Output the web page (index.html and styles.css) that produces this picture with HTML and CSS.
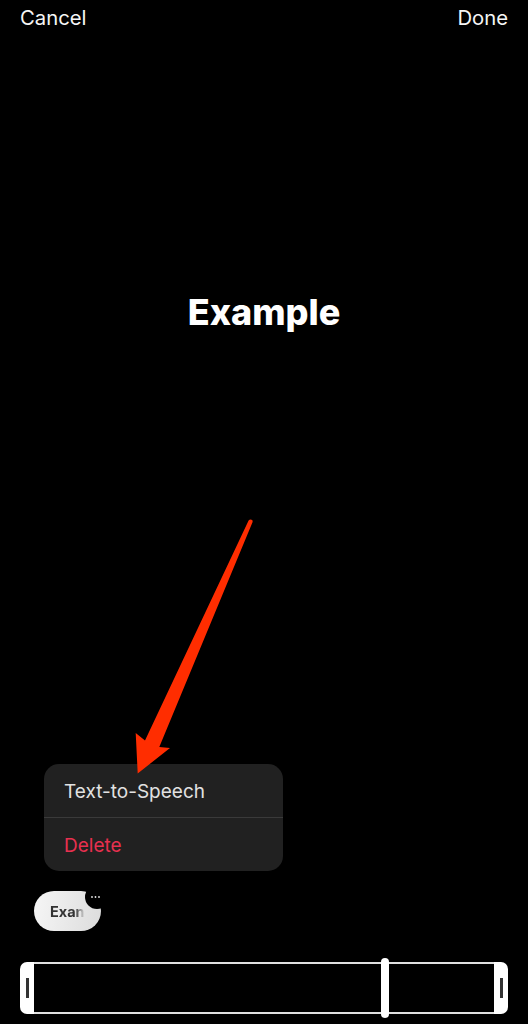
FILE: index.html
```html
<!DOCTYPE html>
<html lang="en">
<head>
<meta charset="utf-8">
<title>Example</title>
<link rel="stylesheet" href="styles.css">
</head>
<body>
<main class="screen">
  <header class="topbar">
    <span class="action">Cancel</span>
    <span class="action">Done</span>
  </header>
  <h1 class="title">Example</h1>
  <section class="menu">
    <div class="menu-item">Text-to-Speech</div>
    <div class="menu-item danger">Delete</div>
  </section>
  <div class="chip">
    <span class="chip-label">Exan</span>
    <span class="chip-more">
      <svg class="chip-dots" width="9" height="2" viewBox="0 0 9 2"><circle cx="1" cy="1" r="0.9"/><circle cx="4.5" cy="1" r="0.9"/><circle cx="8" cy="1" r="0.9"/></svg>
    </span>
  </div>
  <div class="timeline">
    <div class="handle"><span class="grip"></span></div>
    <div class="track"></div>
    <div class="handle handle-right"><span class="grip"></span></div>
    <span class="playhead"></span>
  </div>
  <svg class="arrow" width="528" height="1024" viewBox="0 0 528 1024">
    <path d="M137.7 773.5 L135.7 733 L145 740.5 L248.6 520.5 Q250.5 518.5 252.6 520.5 L252.6 522 L159.3 747 L170 748 Z"/>
  </svg>
</main>
</body>
</html>
```
FILE: styles.css
```css
* { box-sizing: border-box; }
html, body { margin: 0; padding: 0; background: #000; }
.screen {
  position: relative;
  width: 528px;
  height: 1024px;
  overflow: hidden;
  display: flex;
  flex-direction: column;
  background: #000;
  font-family: Inter, "Liberation Sans", sans-serif;
  color: #fff;
}
.topbar {
  display: flex;
  justify-content: space-between;
  padding: 6px 20px 0;
  height: 30px;
}
.action { font-size: 20.3px; line-height: 24px; font-weight: 400; color: #f6f6f6; }
.title {
  margin: 260px 0 0;
  height: 44px;
  font-size: 36px;
  line-height: 44px;
  font-weight: 800;
  text-align: center;
  color: #fff;
}
.menu {
  width: 239px;
  height: 107px;
  margin: 430px 0 0 44px;
  background: #212121;
  border-radius: 15px;
  display: flex;
  flex-direction: column;
}
.menu-item {
  flex: 1;
  display: flex;
  align-items: center;
  padding: 2px 20px 0;
  font-size: 19px;
  color: #e2e2e2;
}
.menu-item:first-child { border-bottom: 1px solid #3a3a3a; }
.menu-item.danger { color: #e8304f; }
.chip {
  position: relative;
  width: 67px;
  height: 40px;
  margin: 20px 0 0 34px;
  padding-left: 16px;
  display: flex;
  align-items: center;
  border-radius: 20px;
  background: linear-gradient(100deg, #f6f6f6, #dcdcdc);
}
.chip-label {
  width: 35px;
  overflow: hidden;
  font-size: 14.5px;
  font-weight: 700;
  color: #333;
  -webkit-mask-image: linear-gradient(90deg, #000 72%, transparent 100%);
  mask-image: linear-gradient(90deg, #000 72%, transparent 100%);
}
.chip-more {
  position: absolute;
  left: 51px;
  top: -6px;
  width: 24px;
  height: 24px;
  padding: 0 4px 0 0;
  border-radius: 50%;
  background: #000;
  display: flex;
  align-items: center;
  justify-content: center;
}
.chip-dots { fill: #e6e6e6; }
.timeline {
  position: relative;
  display: flex;
  width: 488px;
  height: 52px;
  margin: 31px 0 0 20px;
}
.handle {
  width: 14px;
  background: #fff;
  border-radius: 7px 0 0 7px;
  display: flex;
  align-items: center;
  justify-content: center;
}
.handle-right { border-radius: 0 7px 7px 0; }
.grip { width: 3px; height: 20px; background: #333; }
.track {
  flex: 1;
  border-top: 2px solid #e0e0e0;
  border-bottom: 2px solid #e0e0e0;
}
.playhead {
  position: absolute;
  left: 361px;
  top: -4px;
  width: 8px;
  height: 60px;
  border-radius: 4px;
  background: #fff;
}
.arrow {
  position: absolute;
  left: 0;
  top: 0;
  fill: #ff2d00;
  pointer-events: none;
}
```
